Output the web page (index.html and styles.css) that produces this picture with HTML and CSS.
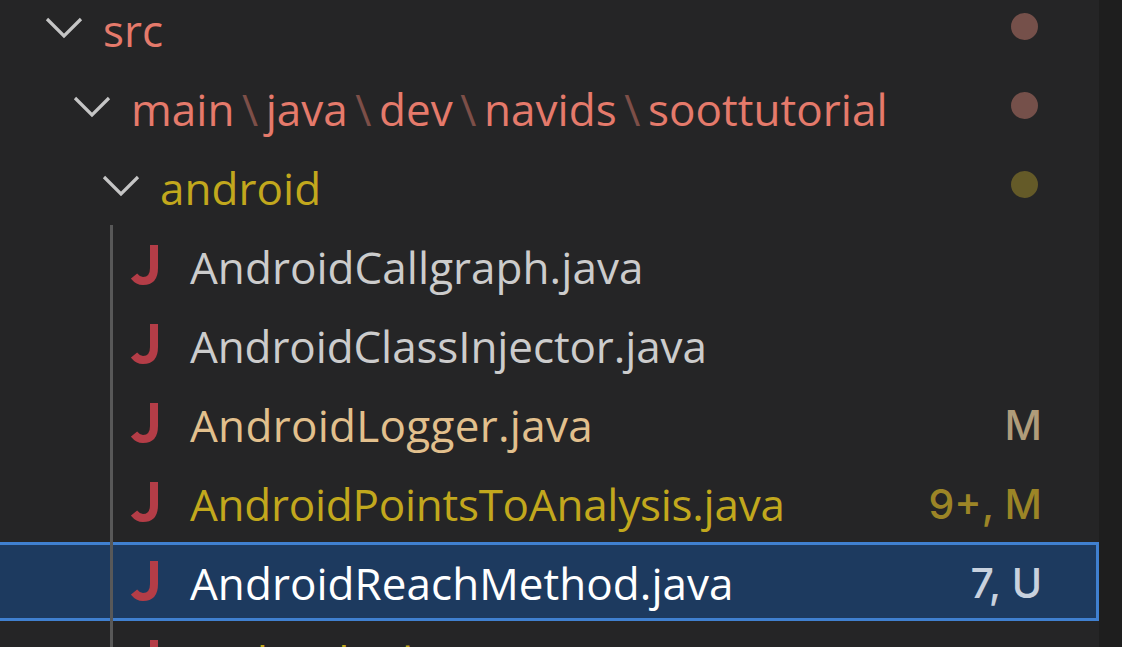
FILE: index.html
```html
<!DOCTYPE html>
<html lang="en">
<head>
<meta charset="utf-8">
<title>Explorer</title>
<link rel="stylesheet" href="styles.css">
</head>
<body>
<div class="workbench">
  <div class="tree">
    <div class="row level-0 folder-red">
      <svg class="chevron" viewBox="0 0 40 22"><path d="M2 2 L19 19 L36 2"/></svg>
      <span class="label">src</span>
      <span class="dot dot-red"></span>
    </div>
    <div class="row level-1 folder-red">
      <svg class="chevron" viewBox="0 0 40 22"><path d="M2 2 L19 19 L36 2"/></svg>
      <span class="label">main<i class="sep">\</i>java<i class="sep">\</i>dev<i class="sep">\</i>navids<i class="sep">\</i>soottutorial</span>
      <span class="dot dot-red"></span>
    </div>
    <div class="row level-2 folder-yellow">
      <svg class="chevron" viewBox="0 0 40 22"><path d="M2 2 L19 19 L36 2"/></svg>
      <span class="label">android</span>
      <span class="dot dot-yellow"></span>
    </div>
    <div class="group">
      <div class="row file">
        <svg class="java" viewBox="0 0 30 42"><path d="M23 0 V23 Q23 36 12 36 Q7 36 3 31"/></svg>
        <span class="label">AndroidCallgraph.java</span>
      </div>
      <div class="row file tight">
        <svg class="java" viewBox="0 0 30 42"><path d="M23 0 V23 Q23 36 12 36 Q7 36 3 31"/></svg>
        <span class="label">AndroidClassInjector.java</span>
      </div>
      <div class="row file modified">
        <svg class="java" viewBox="0 0 30 42"><path d="M23 0 V23 Q23 36 12 36 Q7 36 3 31"/></svg>
        <span class="label">AndroidLogger.java</span>
        <span class="badge">M</span>
      </div>
      <div class="row file warned">
        <svg class="java" viewBox="0 0 30 42"><path d="M23 0 V23 Q23 36 12 36 Q7 36 3 31"/></svg>
        <span class="label">AndroidPointsToAnalysis.java</span>
        <span class="badge">9+, M</span>
      </div>
      <div class="row file selected">
        <svg class="java" viewBox="0 0 30 42"><path d="M23 0 V23 Q23 36 12 36 Q7 36 3 31"/></svg>
        <span class="label">AndroidReachMethod.java</span>
        <span class="badge">7, U</span>
      </div>
      <div class="row file warned">
        <svg class="java" viewBox="0 0 30 42"><path d="M23 0 V23 Q23 36 12 36 Q7 36 3 31"/></svg>
        <span class="label">androidutil.java</span>
      </div>
    </div>
  </div>
  <div class="scroll-track"></div>
</div>
</body>
</html>
```
FILE: styles.css
```css
* { box-sizing: border-box; }
html, body { margin: 0; height: 100%; overflow: hidden; background: #252526; }
.workbench { display: flex; height: 647px; overflow: hidden; }
.tree { width: 1099px; margin-top: -11px; font-family: "Open Sans", "Noto Sans", sans-serif; font-size: 44px; }
.scroll-track { flex: 1; background: #1e1e1e; }
.row { display: flex; align-items: center; height: 79px; padding-right: 57px; color: #ccc; white-space: nowrap; }
.level-0 { padding-left: 45px; }
.level-1 { padding-left: 73px; }
.level-2 { padding-left: 102px; }
.chevron { width: 40px; height: 22px; margin-right: 18px; margin-top: -2px; flex: none; fill: none; stroke: #c5c5c5; stroke-width: 3.2; }
.label { flex: 1; padding-top: 2px; letter-spacing: 0.05px; }
.tight .label { letter-spacing: -0.1px; }
.folder-red { color: #e57a6b; }
.folder-yellow { color: #c2a81d; }
.sep { font-style: normal; color: #7d4f48; margin: 0 7.5px; }
.dot { width: 27px; height: 27px; border-radius: 50%; margin-right: 4px; margin-top: -4px; }
.dot-red { background: #75504a; }
.dot-yellow { background: #645a28; }
.group { position: relative; }
.group::before { content: ""; position: absolute; left: 110px; top: -1px; bottom: 0; width: 3px; background: #585858; z-index: 1; }
.file { padding-left: 131px; }
.java { width: 30px; height: 42px; margin-right: 29px; margin-top: 0; flex: none; fill: none; stroke: #b43d47; stroke-width: 8; }
.badge { font-family: Inter, sans-serif; font-weight: 550; font-size: 41px; padding-top: 2px; }
.modified { color: #e2c08d; }
.modified .label { letter-spacing: 0.3px; }
.modified .badge { color: #b09c7a; }
.warned { color: #c2a81d; }
.warned .label { letter-spacing: -0.25px; }
.warned .badge { color: #9c8526; }
.selected { background: #1d3a5f; border: 3px solid #4080d0; border-left: 0; padding-right: 54px; color: #fff; }
.selected .badge { color: #c8d1de; }
```
